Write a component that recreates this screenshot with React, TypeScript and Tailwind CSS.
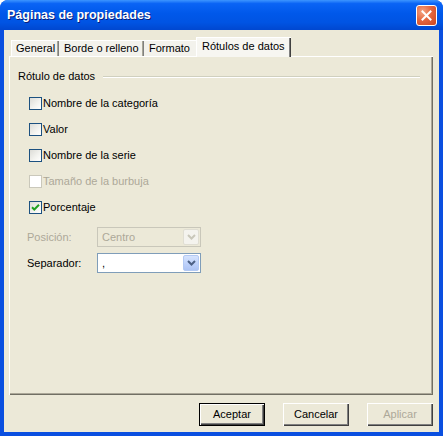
import React from "react";

function Check({ label, checked, disabled }: { label: string; checked?: boolean; disabled?: boolean }) {
  return (
    <div className="flex items-center h-[13px] gap-[1px]">
      <div
        className={
          disabled
            ? "w-[13px] h-[13px] border border-[#cac8bb] bg-white"
            : "w-[13px] h-[13px] border border-[#1c5180] bg-[linear-gradient(135deg,#dcdcd7_0%,#f4f4f0_60%,#ffffff_100%)] flex items-center justify-center"
        }
      >
        {checked && (
          <svg width="11" height="11" viewBox="0 0 11 11">
            <path d="M2 5.2 L4.3 7.5 L9 2.8" fill="none" stroke="#21a121" strokeWidth="2" />
          </svg>
        )}
      </div>
      <span className={disabled ? "text-[#aca899]" : "text-black"}>{label}</span>
    </div>
  );
}

function Chevron({ color }: { color: string }) {
  return (
    <svg width="9" height="6" viewBox="0 0 9 6">
      <path d="M1 1 L4.5 4.5 L8 1" fill="none" stroke={color} strokeWidth="2" />
    </svg>
  );
}

export default function App() {
  return (
    <div className="w-[443px] h-[436px] flex flex-col bg-[#0a4fe0] rounded-t-[8px] overflow-hidden font-['Liberation_Sans',Arial,sans-serif] text-[11px] leading-[13px]">
      {/* Title bar */}
      <div className="h-[30px] flex items-center justify-between pl-[7px] pr-[6px] bg-[linear-gradient(180deg,#3d95ff_0%,#0a64f5_12%,#0058ea_45%,#0054e3_75%,#0047d0_100%)]">
        <span className="text-white font-bold text-[12.5px] leading-[16px] [text-shadow:1px_1px_0_#0a1f7a]">
          Páginas de propiedades
        </span>
        <div className="w-[21px] h-[21px] rounded-[3px] border border-white bg-[radial-gradient(circle_at_30%_30%,#f4a584_0%,#e5673f_45%,#cc4520_100%)] flex items-center justify-center">
          <svg width="11" height="11" viewBox="0 0 11 11">
            <path d="M1.5 1.5 L9.5 9.5 M9.5 1.5 L1.5 9.5" stroke="#ffffff" strokeWidth="2" strokeLinecap="square" />
          </svg>
        </div>
      </div>

      {/* Body */}
      <div className="flex-1 mx-[4px] mb-[4px] bg-[#ece9d8] flex flex-col">
        {/* Tabs */}
        <div className="pt-[7px] pl-[7px] h-[26px] flex items-end relative z-10">
          <div className="w-[48px] h-[16px] bg-[#f3f2ec] shadow-[inset_1px_1px_0_#ffffff,inset_-1px_0_0_#808080,inset_-2px_0_0_#a8a698] flex items-center pl-[5px]">
            General
          </div>
          <div className="w-[85px] h-[16px] bg-[#f3f2ec] shadow-[inset_0_1px_0_#ffffff,inset_-1px_0_0_#808080,inset_-2px_0_0_#a8a698] flex items-center pl-[5px]">
            Borde o relleno
          </div>
          <div className="w-[52px] h-[16px] bg-[#f3f2ec] shadow-[inset_0_1px_0_#ffffff] flex items-center pl-[5px]">
            Formato
          </div>
          <div className="w-[95px] h-[20px] -mb-[1px] bg-[#f7f6f1] shadow-[inset_1px_1px_0_#ffffff,inset_-1px_0_0_#404040,inset_-2px_0_0_#808080] flex items-start pt-[3px] pl-[6px]">
            Rótulos de datos
          </div>
        </div>

        {/* Panel */}
        <div className="ml-[5px] mr-[6px] h-[339px] bg-[#ece9d8] shadow-[inset_1px_1px_0_#ffffff,inset_-1px_-1px_0_#716f64,inset_-2px_-2px_0_#aca899] pt-[14px] flex flex-col">
          <div className="flex items-center h-[13px] pl-[9px] pr-[13px]">
            <span>Rótulo de datos</span>
            <div className="flex-1 ml-[8px] h-[2px] border-t border-[#d0d0bf] border-b border-b-white" />
          </div>

          <div className="pl-[20px] mt-[14px] flex flex-col gap-[13px]">
            <Check label="Nombre de la categoría" />
            <Check label="Valor" />
            <Check label="Nombre de la serie" />
            <Check label="Tamaño de la burbuja" disabled />
            <Check label="Porcentaje" checked />
          </div>

          <div className="pl-[18px] mt-[13px] flex flex-col gap-[6px]">
            <div className="flex items-center h-[20px]">
              <span className="w-[70px] text-[#aca899]">Posición:</span>
              <div className="w-[104px] h-[20px] border border-[#c9c7ba] bg-[#ece9d8] flex items-center p-[1px]">
                <span className="flex-1 pl-[3px] text-[#aca899]">Centro</span>
                <div className="w-[16px] h-full bg-[#f4f3ee] border border-[#e0ded3] rounded-[2px] flex items-center justify-center">
                  <Chevron color="#c9c7ba" />
                </div>
              </div>
            </div>
            <div className="flex items-center h-[20px]">
              <span className="w-[70px]">Separador:</span>
              <div className="w-[104px] h-[20px] border border-[#7f9db9] bg-white flex items-center p-[1px]">
                <span className="flex-1 pl-[3px]">,</span>
                <div className="w-[16px] h-full bg-[linear-gradient(180deg,#d6e4fe_0%,#bcd0fa_60%,#adc4f4_100%)] border border-[#b3c9f3] rounded-[2px] flex items-center justify-center">
                  <Chevron color="#4d6185" />
                </div>
              </div>
            </div>
          </div>
        </div>

        {/* Buttons */}
        <div className="flex justify-end gap-[18px] pr-[6px] pt-[8px]">
          <div className="w-[66px] h-[23px] bg-[#ece9d8] border border-black shadow-[inset_1px_1px_0_#ffffff,inset_-1px_-1px_0_#404040,inset_-2px_-2px_0_#808080] flex items-center justify-center">
            Aceptar
          </div>
          <div className="w-[66px] h-[23px] bg-[#ece9d8] shadow-[inset_1px_1px_0_#ffffff,inset_-1px_-1px_0_#404040,inset_-2px_-2px_0_#808080] flex items-center justify-center">
            Cancelar
          </div>
          <div className="w-[66px] h-[23px] bg-[#ece9d8] shadow-[inset_1px_1px_0_#ffffff,inset_-1px_-1px_0_#404040,inset_-2px_-2px_0_#808080] flex items-center justify-center text-[#aca899]">
            Aplicar
          </div>
        </div>
      </div>
    </div>
  );
}
